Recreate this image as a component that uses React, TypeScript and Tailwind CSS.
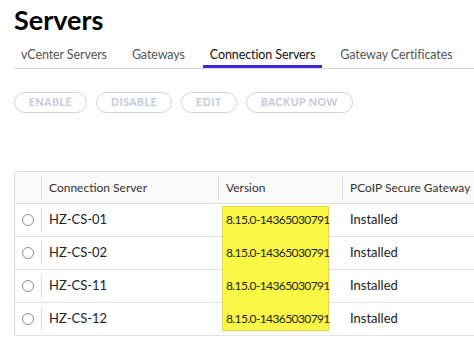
import { useState } from 'react';

const tabs = ['vCenter Servers', 'Gateways', 'Connection Servers', 'Gateway Certificates'];
const actions = ['ENABLE', 'DISABLE', 'EDIT', 'BACKUP NOW'];
const rows = ['HZ-CS-01', 'HZ-CS-02', 'HZ-CS-11', 'HZ-CS-12'];

export default function App() {
  const [active] = useState(2);

  return (
    <div className="w-[474px] h-[344px] overflow-hidden bg-white text-[#1b1b1b] font-['Lato','Liberation_Sans',sans-serif] whitespace-nowrap">
      <h1 className="pl-[14px] pt-[3px] text-[27px] leading-[34px] font-bold text-black">Servers</h1>

      <div className="ml-[14px] mt-[8px] flex border-b border-[#d8d8d8] h-[24px]">
        {tabs.map((t, i) => (
          <div
            key={t}
            className={
              'shrink-0 px-[7px] mr-[11px] text-[12.5px] tracking-[-0.1px] leading-[20px] ' +
              (i === active ? 'border-b-[3px] border-[#3f27d6] text-[#111]' : 'text-[#555]')
            }
          >
            {t}
          </div>
        ))}
      </div>

      <div className="ml-[14px] mt-[23px] flex gap-[9px]">
        {actions.map((a) => (
          <button
            key={a}
            disabled
            className="h-[21px] px-[14px] rounded-full border border-[#cdd3e0] text-[10.5px] font-bold tracking-[0.05em] text-[#c3cad8]"
          >
            {a}
          </button>
        ))}
      </div>

      <div className="relative ml-[14px] mt-[58px] border-l border-t border-[#dcdcdc] rounded-tl-[4px] text-[12px]">
        <div className="flex h-[32px] bg-[#fafafa] border-b border-[#dcdcdc] items-center">
          <div className="shrink-0 w-[27px] h-[24px] border-r border-[#dcdcdc]" />
          <div className="shrink-0 w-[177px] h-[24px] border-r border-[#dcdcdc] pl-[7px] leading-[24px] text-[#333]">Connection Server</div>
          <div className="shrink-0 w-[124px] h-[24px] border-r border-[#dcdcdc] pl-[7px] leading-[24px] text-[#333]">Version</div>
          <div className="pl-[7px] leading-[24px] text-[#333]">PCoIP Secure Gateway</div>
        </div>
        {rows.map((r) => (
          <div key={r} className="flex h-[33px] border-b border-[#e2e2e2] items-center">
            <div className="shrink-0 w-[27px] h-[24px] border-r border-[#dcdcdc] flex items-center justify-center">
              <span className="block w-[12px] h-[12px] rounded-full border border-[#8c8c8c]" />
            </div>
            <div className="shrink-0 w-[177px] pl-[7px] text-[13px] text-[#222]">{r}</div>
            <div className="shrink-0 w-[124px] pl-[7px] text-[12px] tracking-[-0.6px] text-[#222] relative z-10">8.15.0-14365030791</div>
            <div className="pl-[7px] text-[13px] text-[#222]">Installed</div>
          </div>
        ))}
        <div className="absolute left-[207px] top-[34px] w-[107px] h-[125px] bg-[#fbf845] border border-[#e3d84a]" />
      </div>
    </div>
  );
}
